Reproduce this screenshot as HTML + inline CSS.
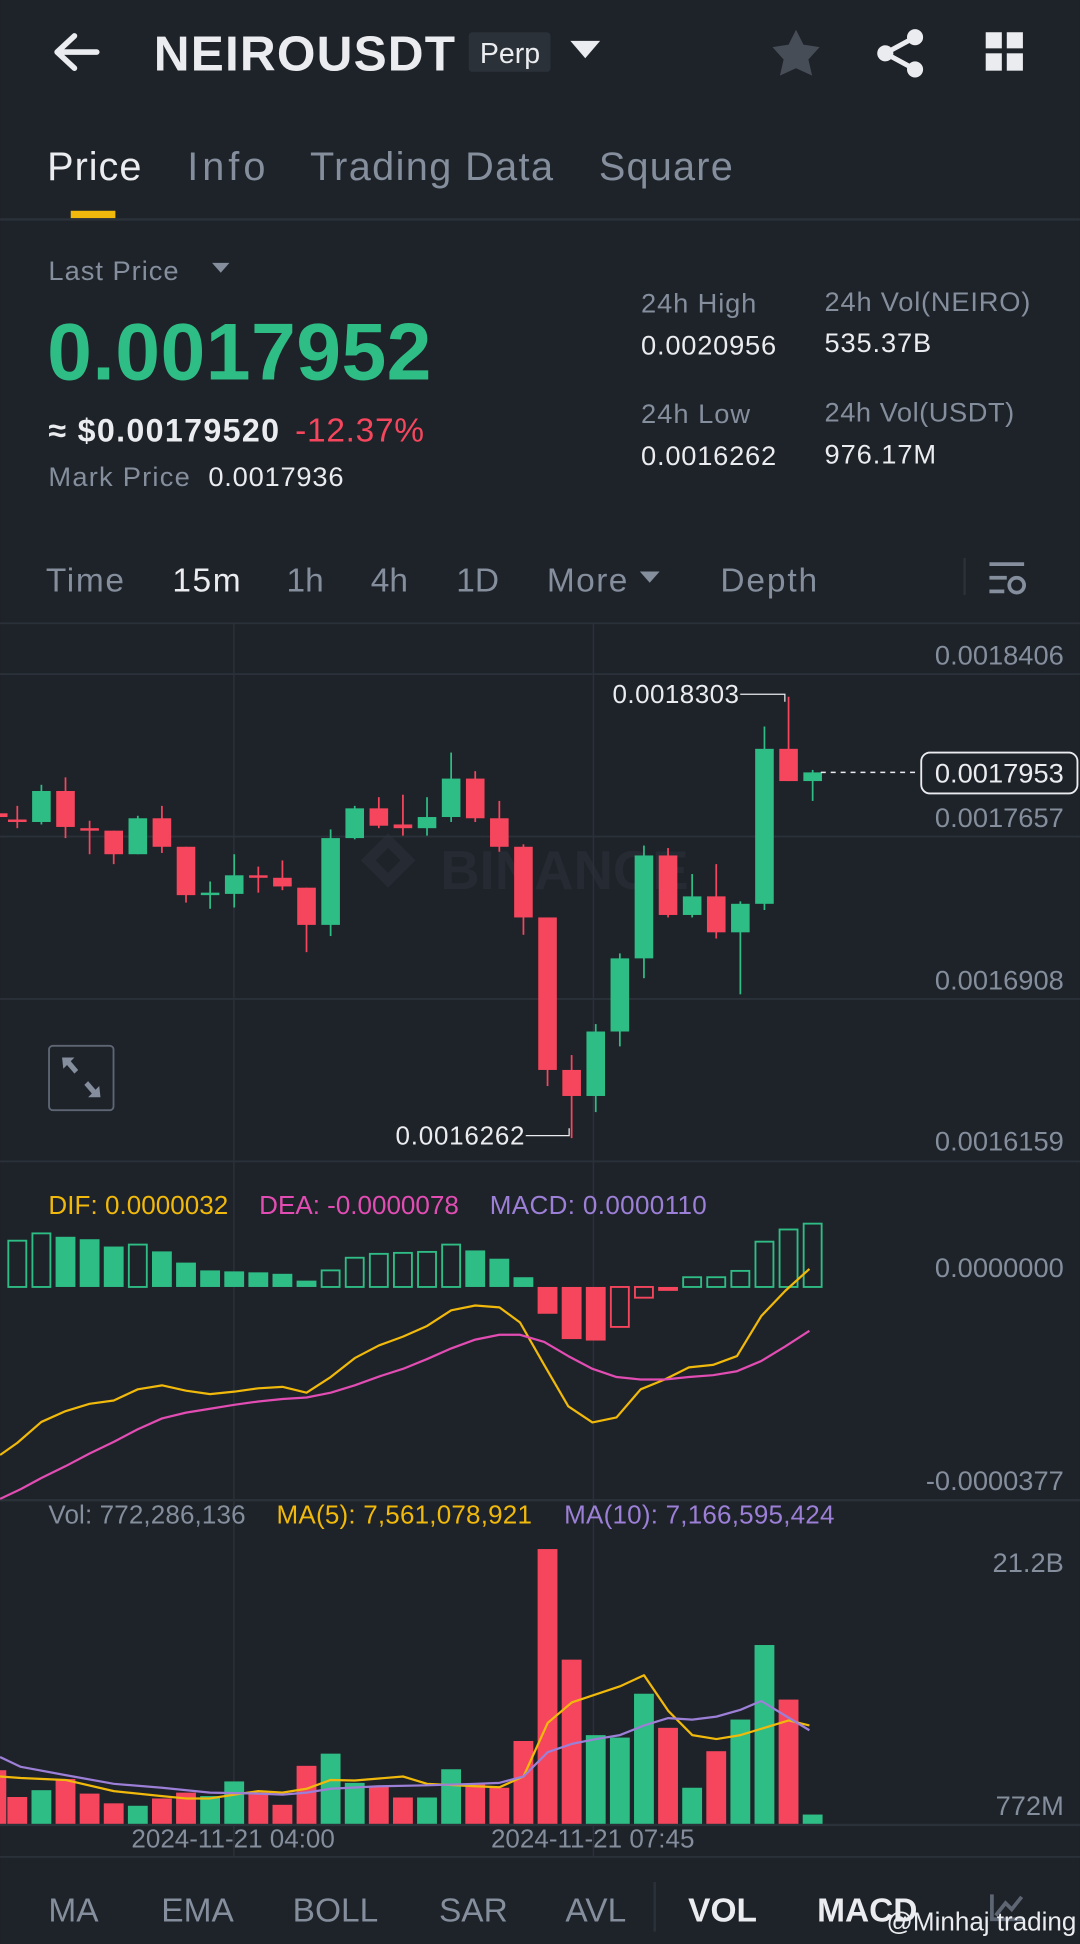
<!DOCTYPE html>
<html><head><meta charset="utf-8">
<style>
html,body{margin:0;padding:0;background:#1e2229;width:1080px;height:1944px;overflow:hidden}
svg{display:block}
text{font-family:"Liberation Sans","DejaVu Sans",sans-serif}
</style></head><body>
<svg id="s" width="1080" height="1944" viewBox="0 0 871 1568" xmlns="http://www.w3.org/2000/svg">
<rect width="871" height="1568" fill="#1e2229"/>
<path d="M78 42H48M60 29L46 42L60 55" stroke="#eaecef" stroke-width="4.5" fill="none" stroke-linecap="round" stroke-linejoin="round"/>
<text x="124" y="57" font-size="40" font-weight="bold" fill="#eaecef" textLength="243">NEIROUSDT</text>
<rect x="378" y="26" width="66" height="32" rx="3" fill="#2b3139"/>
<text x="387" y="51" font-size="23" fill="#eaecef">Perp</text>
<path d="M460 33h24l-12 14z" fill="#eaecef"/>
<path d="M642 24l6 12 13 2-9 10 3 13-13-6-13 6 3-13-9-10 13-2z" fill="#474d57"/>
<g fill="#eaecef" stroke="#eaecef"><circle cx="738" cy="30" r="6"/><circle cx="738" cy="56" r="6"/><circle cx="714" cy="43" r="6"/><path d="M738 30L714 43L738 56" stroke-width="4" fill="none"/></g>
<g fill="#eaecef"><rect x="795" y="26" width="13" height="13"/><rect x="812" y="26" width="13" height="13"/><rect x="795" y="43" width="13" height="14"/><rect x="812" y="43" width="13" height="14"/></g>
<text x="38" y="145" font-size="32" fill="#eaecef" textLength="76">Price</text>
<text x="151" y="145" font-size="32" fill="#848e9c" textLength="63">Info</text>
<text x="250" y="145" font-size="32" fill="#848e9c" textLength="196">Trading Data</text>
<text x="483" y="145" font-size="32" fill="#848e9c" textLength="108">Square</text>
<rect x="57" y="170" width="36" height="6" fill="#f0b90b"/>
<rect x="0" y="176" width="871" height="2" fill="#2b3139"/>
<text x="39" y="226" font-size="22" fill="#848e9c" textLength="105">Last Price</text>
<path d="M171 212h14l-7 8z" fill="#848e9c"/>
<text x="38" y="306" font-size="65" font-weight="bold" fill="#2ebd85" textLength="310">0.0017952</text>
<text x="39" y="356" font-size="26" font-weight="bold" fill="#eaecef" textLength="186">≈ $0.00179520</text>
<text x="238" y="356" font-size="27" fill="#f6465d" textLength="104">-12.37%</text>
<text x="39" y="392" font-size="22" fill="#848e9c" textLength="114">Mark Price</text>
<text x="168" y="392" font-size="22" fill="#eaecef" textLength="109">0.0017936</text>
<text x="517" y="252" font-size="22" fill="#848e9c" textLength="93">24h High</text>
<text x="517" y="286" font-size="22" fill="#eaecef" textLength="109">0.0020956</text>
<text x="665" y="251" font-size="22" fill="#848e9c" textLength="166">24h Vol(NEIRO)</text>
<text x="665" y="284" font-size="22" fill="#eaecef" textLength="86">535.37B</text>
<text x="517" y="341" font-size="22" fill="#848e9c" textLength="88">24h Low</text>
<text x="517" y="375" font-size="22" fill="#eaecef" textLength="109">0.0016262</text>
<text x="665" y="340" font-size="22" fill="#848e9c" textLength="153">24h Vol(USDT)</text>
<text x="665" y="374" font-size="22" fill="#eaecef" textLength="90">976.17M</text>
<g font-size="27" fill="#848e9c"><text x="37" y="477" textLength="63">Time</text><text x="139" y="477" fill="#eaecef" textLength="55">15m</text><text x="231" y="477">1h</text><text x="299" y="477">4h</text><text x="368" y="477">1D</text><text x="441" y="477" textLength="65">More</text><text x="581" y="477" textLength="78">Depth</text></g>
<path d="M516 461h16l-8 9z" fill="#848e9c"/>
<rect x="777" y="450" width="2" height="30" fill="#2b3139"/>
<g stroke="#848e9c" stroke-width="3" fill="none"><path d="M798 455h28M798 466h14M798 477h12"/><circle cx="820" cy="472" r="6"/></g>
<rect x="0" y="502" width="871" height="1.5" fill="#2b3139"/>
<g fill="#2b3139">
<rect x="0" y="543" width="871" height="1.5"/><rect x="0" y="674" width="871" height="1.5"/><rect x="0" y="805" width="871" height="1.5"/><rect x="0" y="936" width="871" height="1.5"/><rect x="0" y="1209" width="871" height="2"/><rect x="0" y="1471" width="871" height="2"/><rect x="0" y="1497" width="871" height="1.5"/>
<rect x="188" y="503" width="1.2" height="994"/><rect x="478" y="503" width="1.2" height="994"/>
</g>
<g opacity="0.55"><path d="M313 672l22 22-22 22-22-22z M313 684l10 10-10 10-10-10z" fill="#2d323b" fill-rule="evenodd"/>
<text x="355" y="717" font-size="44" font-weight="bold" fill="#2d323b">BINANCE</text></g>
<g id="chart"></g>
<g font-size="22" fill="#848e9c" text-anchor="end">
<text x="858" y="536">0.0018406</text><text x="858" y="667">0.0017657</text><text x="858" y="798">0.0016908</text><text x="858" y="928">0.0016159</text>
<text x="858" y="1030">0.0000000</text><text x="858" y="1202">-0.0000377</text>
<text x="858" y="1268">21.2B</text><text x="858" y="1464">772M</text>
</g>
<rect x="743" y="607" width="126" height="33" rx="7" fill="#1e2229" stroke="#eaecef" stroke-width="1.5"/>
<text x="806" y="631" font-size="22" fill="#eaecef" text-anchor="middle">0.0017953</text>
<path d="M662 623H738" stroke="#eaecef" stroke-width="1.2" stroke-dasharray="4 4"/>
<text x="494" y="567" font-size="21" fill="#eaecef" textLength="102">0.0018303</text>
<path d="M597 560H633V566" stroke="#eaecef" stroke-width="1" fill="none"/>
<text x="319" y="923" font-size="21" fill="#eaecef" textLength="104">0.0016262</text>
<path d="M424 916H459V910" stroke="#eaecef" stroke-width="1" fill="none"/>
<rect x="39.5" y="843.5" width="52" height="52" rx="3" fill="none" stroke="#5e6673" stroke-width="1.5"/>
<path d="M50 853h10l-3 3 6 7-3 3-6-7-3 3z M81 885h-10l3-3-6-7 3-3 6 7 3-3z" fill="#848e9c"/>
<text x="39" y="979" font-size="21" fill="#f0b90b" textLength="145">DIF: 0.0000032</text>
<text x="209" y="979" font-size="21" fill="#e24db3" textLength="161">DEA: -0.0000078</text>
<text x="395" y="979" font-size="21" fill="#9c7fd6" textLength="175">MACD: 0.0000110</text>
<text x="39" y="1229" font-size="21" fill="#848e9c" textLength="159">Vol: 772,286,136</text>
<text x="223" y="1229" font-size="21" fill="#f0b90b" textLength="206">MA(5): 7,561,078,921</text>
<text x="455" y="1229" font-size="21" fill="#9c7fd6" textLength="218">MA(10): 7,166,595,424</text>
<text x="188" y="1490" font-size="21" fill="#848e9c" text-anchor="middle">2024-11-21 04:00</text>
<text x="478" y="1490" font-size="21" fill="#848e9c" text-anchor="middle">2024-11-21 07:45</text>
<g font-size="27" fill="#848e9c"><text x="39" y="1550">MA</text><text x="130" y="1550">EMA</text><text x="236" y="1550">BOLL</text><text x="354" y="1550">SAR</text><text x="456" y="1550">AVL</text>
<text x="555" y="1550" fill="#eaecef" font-weight="bold">VOL</text><text x="659" y="1550" fill="#eaecef" font-weight="bold">MACD</text></g>
<rect x="527" y="1518" width="2" height="40" fill="#2b3139"/>
<path d="M800 1528v20h26 M803 1545l8-10 5 5 8-10" stroke="#5e6673" stroke-width="3" fill="none"/>
<text x="715" y="1557" font-size="21" fill="#eaecef">@Minhaj trading</text>
</svg>
<script>
var G="#2ebd85",R="#f6465d",g=document.getElementById("chart"),h="";
function cx(i){return 13.9+19.44*i}
var c=[[661,663,650,668,0],[638,663,633,665,1],[638,667,627,676,0],[668,670,662,689,0],[670,689,670,697,0],[660,689,658,689,1],[660,683,650,688,0],[683,722,683,728,0],[720,722,711,733,1],[706,721,689,732,1],[706,707,699,720,0],[708,715,694,718,0],[716,746,716,768,0],[676,746,669,755,1],[652,676,650,677,1],[652,666,643,668,0],[665,668,641,674,0],[659,668,643,674,1],[628,659,607,663,1],[628,660,622,663,0],[660,683,646,687,0],[683,740,681,754,0],[740,863,740,876,0],[863,884,851,918,0],[832,884,826,897,1],[773,832,769,844,1],[690,773,682,789,1],[690,738,684,740,0],[723,738,705,740,1],[723,752,697,757,0],[729,752,727,802,1],[604,729,586,734,1],[604,630,562,630,0],[623,630,621,646,1]];
h+='<rect x="-3" y="656" width="9" height="3" fill="'+R+'"/>';
c.forEach(function(d,i){var x=cx(i),col=d[4]?G:R;h+='<rect x="'+(x-0.7)+'" y="'+d[2]+'" width="1.4" height="'+(d[3]-d[2])+'" fill="'+col+'"/><rect x="'+(x-7.5)+'" y="'+d[0]+'" width="15" height="'+Math.max(2,d[1]-d[0])+'" fill="'+col+'"/>';});
function my(z){return 951.6+z/2.545}
var hist=[[125,1,1],[110,1,1],[117,1,0],[122,1,0],[137,1,0],[133,1,1],[147,1,0],[170,1,0],[186,1,0],[188,1,0],[190,1,0],[193,1,0],[207,1,0],[186,1,1],[160,1,1],[152,1,1],[150,1,1],[148,1,1],[133,1,1],[145,1,0],[162,1,0],[200,1,0],[275,0,0],[327,0,0],[330,0,0],[302,0,1],[242,0,1],[228,0,0],[200,1,1],[200,1,1],[187,1,1],[127,1,1],[102,1,1],[90,1,1]];
var base=my(220);
hist.forEach(function(d,i){var x=cx(i)-8,y=my(d[0]),col=d[1]?G:R,t=Math.min(y,base),hh=Math.max(1.5,Math.abs(base-y));
if(d[2])h+='<rect x="'+(x+0.75)+'" y="'+t+'" width="14.5" height="'+hh+'" fill="none" stroke="'+col+'" stroke-width="1.5"/>';else h+='<rect x="'+x+'" y="'+t+'" width="16" height="'+hh+'" fill="'+col+'"/>';});
function line(pts,f,col){var s=pts.map(function(p){return (p[0]/1.8).toFixed(1)+","+f(p[1]).toFixed(1)}).join(" ");h+='<polyline points="'+s+'" fill="none" stroke="'+col+'" stroke-width="1.8" stroke-linejoin="round"/>';}
line([[0,565],[25,540],[60,497],[95,475],[130,460],[165,453],[200,430],[235,422],[270,433],[305,440],[340,435],[375,428],[410,425],[445,437],[480,405],[515,366],[550,340],[585,322],[620,300],[655,268],[690,258],[725,262],[755,293],[790,380],[825,465],[860,498],[895,488],[930,430],[965,410],[1000,385],[1035,380],[1070,362],[1105,280],[1140,228],[1175,183]],my,"#f0b90b");
line([[0,655],[30,635],[60,612],[95,588],[130,562],[165,538],[200,512],[235,490],[270,478],[305,470],[340,462],[375,455],[410,450],[445,447],[480,437],[515,422],[550,404],[585,388],[620,368],[655,346],[690,328],[725,318],[755,318],[790,333],[825,362],[860,388],[895,405],[930,410],[965,410],[1000,405],[1035,401],[1070,393],[1105,372],[1140,342],[1175,310]],my,"#e24db3");
var vb=my(1322);
var vol=[[1267,0],[1253,1],[1230,0],[1260,0],[1280,0],[1285,1],[1270,0],[1258,0],[1265,1],[1235,1],[1258,0],[1283,0],[1203,0],[1178,1],[1238,1],[1245,0],[1268,0],[1268,1],[1210,1],[1240,0],[1248,0],[1152,0],[758,0],[985,0],[1140,1],[1145,1],[1055,1],[1125,0],[1248,1],[1173,0],[1108,1],[955,1],[1067,0],[1303,1]];
h+='<rect x="-6" y="'+my(1212)+'" width="11" height="'+(vb-my(1212))+'" fill="'+R+'"/>';
vol.forEach(function(d,i){var y=my(d[0]);h+='<rect x="'+(cx(i)-8)+'" y="'+y+'" width="16" height="'+(vb-y)+'" fill="'+(d[1]?G:R)+'"/>';});
line([[0,1225],[30,1228],[95,1232],[165,1255],[235,1265],[270,1270],[305,1270],[340,1262],[375,1255],[410,1258],[445,1250],[480,1232],[515,1233],[585,1225],[620,1240],[690,1245],[725,1247],[760,1225],[795,1115],[830,1073],[900,1040],[935,1017],[970,1090],[1005,1140],[1040,1148],[1075,1140],[1145,1110],[1175,1120]],my,"#f0b90b");
line([[0,1185],[30,1205],[95,1222],[165,1240],[235,1248],[305,1258],[375,1260],[410,1262],[445,1258],[480,1250],[550,1245],[620,1243],[690,1240],[725,1238],[760,1225],[795,1175],[830,1158],[865,1148],[900,1140],[935,1120],[970,1105],[1005,1108],[1040,1102],[1075,1088],[1105,1070],[1140,1100],[1175,1130]],my,"#9c7fd6");
g.innerHTML=h;
</script>
</body></html>
